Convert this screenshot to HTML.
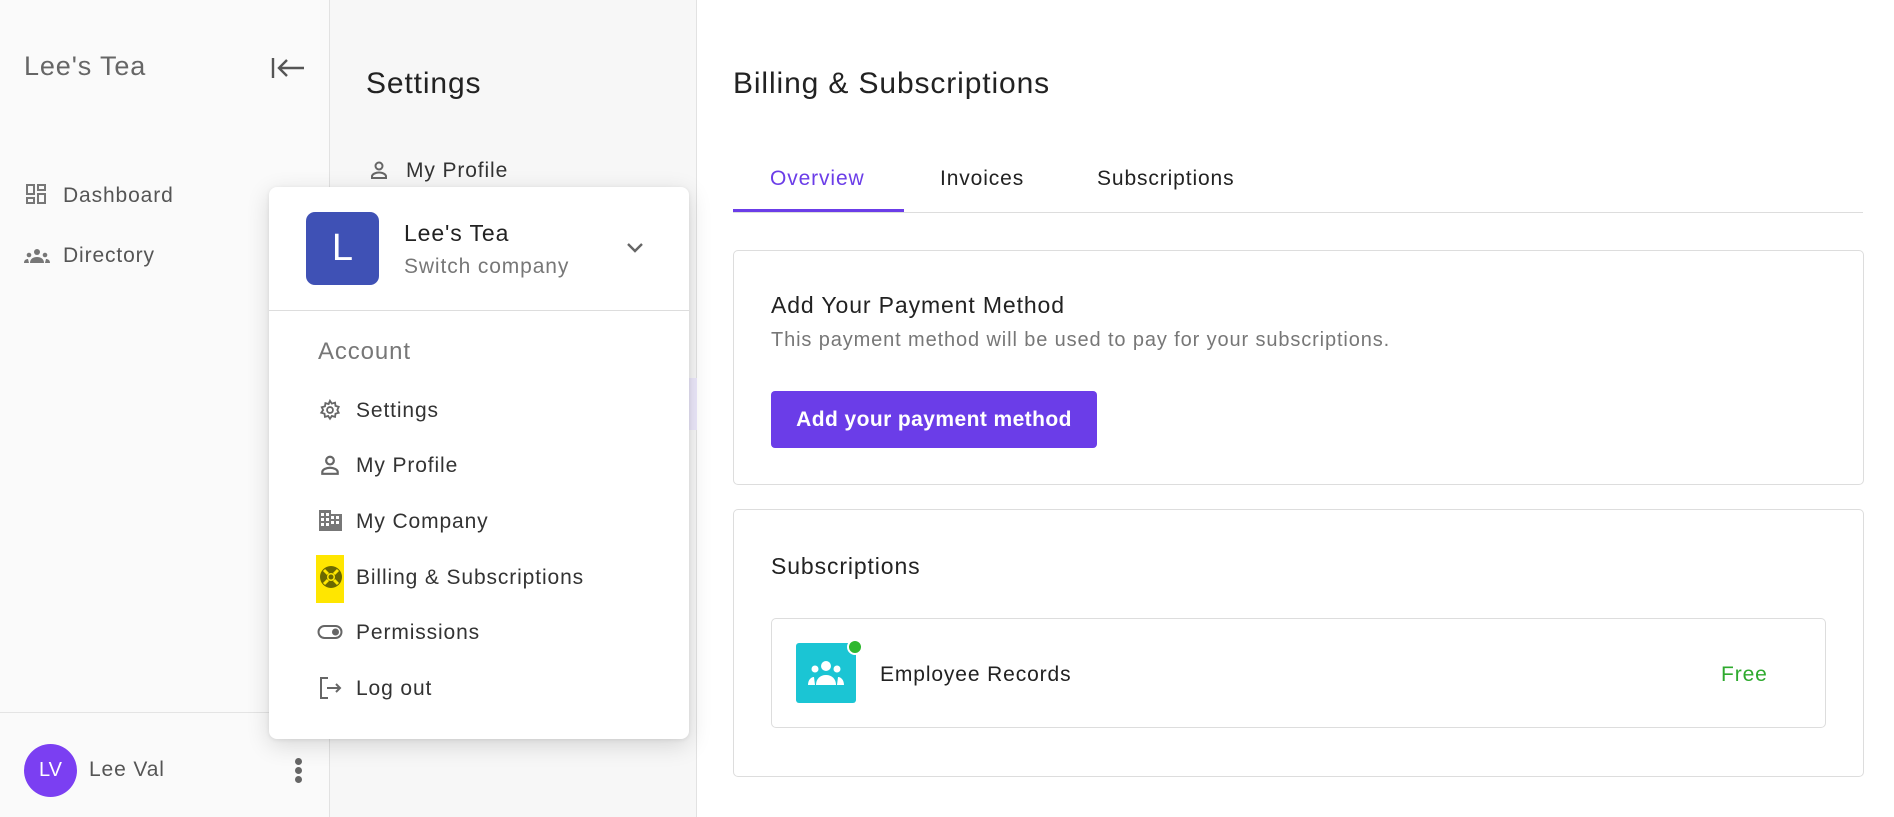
<!DOCTYPE html>
<html><head><meta charset="utf-8">
<style>
*{box-sizing:border-box;margin:0;padding:0}
body{width:1894px;height:817px;overflow:hidden;background:#fff;font-family:"Liberation Sans",sans-serif;position:relative;color:#222;letter-spacing:.055em}
.abs{position:absolute;white-space:nowrap}
#side{position:absolute;left:0;top:0;width:330px;height:817px;background:#fafafa;border-right:1px solid #e2e2e2}
#set{position:absolute;left:330px;top:0;width:367px;height:817px;background:#f7f7f7;border-right:1px solid #e2e2e2}
.t{line-height:1}
#pop{position:absolute;left:269px;top:187px;width:420px;height:552px;background:#fff;border-radius:8px;box-shadow:0 6px 24px rgba(0,0,0,.14),0 1px 4px rgba(0,0,0,.08)}
.item{position:absolute;left:87px;font-size:21px;color:#333;line-height:1}
.ic{position:absolute;left:-37px;top:-1px}
.card{position:absolute;border:1px solid #ddd;border-radius:5px;background:#fff}
</style></head><body>
<div id="side">
 <div class="abs t" style="left:24px;top:53px;font-size:27px;color:#666">Lee's Tea</div>
 <svg class="abs" style="left:270px;top:56px" width="36" height="24" viewBox="0 0 36 24"><path d="M3 2v20M34 12H9M17 4l-8 8 8 8" stroke="#555" stroke-width="2.4" fill="none"/></svg>
 <svg class="abs" style="left:26px;top:184px" width="20" height="20" viewBox="0 0 20 20" fill="none" stroke="#777" stroke-width="2"><rect x="1" y="1" width="7" height="9"/><rect x="12" y="1" width="7" height="5"/><rect x="1" y="14" width="7" height="5"/><rect x="12" y="10" width="7" height="9"/></svg>
 <div class="abs t" style="left:63px;top:185px;font-size:21px;color:#555">Dashboard</div>
 <svg class="abs" style="left:24px;top:248px" width="26" height="16" viewBox="0 0 26 16" fill="#777"><circle cx="13" cy="4" r="3"/><circle cx="5" cy="7" r="2.3"/><circle cx="21" cy="7" r="2.3"/><path d="M6 15c0-4 3-6 7-6s7 2 7 6z"/><path d="M0 15c0-3 2-4 4-4l1 4zM26 15c0-3-2-4-4-4l-1 4z"/></svg>
 <div class="abs t" style="left:63px;top:245px;font-size:21px;color:#555">Directory</div>
 <div class="abs" style="left:0;top:712px;width:330px;border-top:1px solid #e4e4e4"></div>
 <div class="abs" style="left:24px;top:744px;width:53px;height:53px;border-radius:50%;background:#7b3ff2;color:#fff;font-size:20px;text-align:center;line-height:53px;letter-spacing:0">LV</div>
 <div class="abs t" style="left:89px;top:759px;font-size:21px;color:#555">Lee Val</div>
 <div class="abs" style="left:295px;top:758px;width:7px;height:7px;border-radius:50%;background:#666;box-shadow:0 9px 0 #666,0 18px 0 #666"></div>
</div>
<div id="set">
 <div class="abs t" style="left:36px;top:69px;font-size:30px;color:#222">Settings</div>
 <svg class="abs" style="left:39px;top:160px" width="20" height="20" viewBox="0 0 20 20" fill="none" stroke="#666" stroke-width="2"><circle cx="10" cy="6" r="3.5"/><path d="M3 18v-1.5c0-2.5 4-4 7-4s7 1.5 7 4V18z"/></svg>
 <div class="abs t" style="left:76px;top:160px;font-size:21px;color:#333">My Profile</div>
 <div class="abs" style="left:359px;top:378px;width:8px;height:52px;background:#ece8fb"></div>
</div>
<div id="pop">
 <div class="abs" style="left:37px;top:25px;width:73px;height:73px;border-radius:9px;background:#3f51b5;color:#fff;font-size:38px;text-align:center;line-height:73px;letter-spacing:0">L</div>
 <div class="abs t" style="left:135px;top:35px;font-size:23px;color:#222">Lee's Tea</div>
 <div class="abs t" style="left:135px;top:69px;font-size:21px;color:#777">Switch company</div>
 <svg class="abs" style="left:357px;top:55px" width="18" height="12" viewBox="0 0 18 12"><path d="M2 2l7 7 7-7" stroke="#666" stroke-width="2.4" fill="none"/></svg>
 <div class="abs" style="left:0;top:123px;width:420px;border-top:1px solid #ddd"></div>
 <div class="abs t" style="left:49px;top:153px;font-size:24px;color:#777">Account</div>
 <div class="item" style="top:213px"><svg class="ic" width="22" height="22" viewBox="0 0 24 24" fill="none" stroke="#666" stroke-width="2"><circle cx="12" cy="12" r="3.2"/><path d="M12 2l2 3 3.5-1 .5 3.5 3.5 1-1.5 3.5 1.5 3-3.5 1-.5 3.5-3.5-1-2 3-2-3-3.5 1-.5-3.5-3.5-1L4.5 12 3 9l3.5-1L7 4.5l3.5 1z"/></svg>Settings</div>
 <div class="item" style="top:268px"><svg class="ic" width="22" height="22" viewBox="0 0 20 20" fill="none" stroke="#666" stroke-width="2"><circle cx="10" cy="6" r="3.5"/><path d="M3 18v-1.5c0-2.5 4-4 7-4s7 1.5 7 4V18z"/></svg>My Profile</div>
 <div class="item" style="top:324px"><svg class="ic" width="23" height="21" viewBox="0 0 23 21" fill="#777"><path d="M0 0h12v4h11v17H0zM2 3v3h3V3zm5 0v3h3V3zM2 8v3h3V8zm5 0v3h3V8zM2 13v3h3v-3zm5 0v3h3v-3zm5-7v3h3V6zm0 5v3h3v-3zm5-5v3h3V6zm0 5v3h3v-3z"/></svg>My Company</div>
 <div class="item" style="top:380px"><span class="abs" style="left:-40px;top:-12px;width:28px;height:48px;background:#ffe600"></span><svg class="ic" width="24" height="24" viewBox="0 0 24 24" style="top:-2px"><circle cx="12" cy="12" r="11" fill="#6b6800"/><circle cx="12" cy="12" r="4" fill="#ffe600"/><path d="M5 5l4 4M19 5l-4 4M5 19l4-4M19 19l-4-4" stroke="#ffe600" stroke-width="3"/><circle cx="12" cy="12" r="2.5" fill="#6b6800"/></svg>Billing &amp; Subscriptions</div>
 <div class="item" style="top:435px"><svg class="ic" width="26" height="16" viewBox="0 0 26 16" style="top:2px;left:-39px"><rect x="1.5" y="2" width="23" height="12" rx="6" fill="none" stroke="#666" stroke-width="2"/><circle cx="18.5" cy="8" r="3.5" fill="#666"/></svg>Permissions</div>
 <div class="item" style="top:491px"><svg class="ic" width="24" height="22" viewBox="0 0 24 22" fill="none" stroke="#666" stroke-width="2"><path d="M9 1H2v20h7M8 11h13M17 7l4 4-4 4"/></svg>Log out</div>
</div>
<div class="abs t" style="left:733px;top:69px;font-size:30px;color:#222">Billing &amp; Subscriptions</div>
<div class="abs t" style="left:770px;top:168px;font-size:21px;color:#6b3de8">Overview</div>
<div class="abs t" style="left:940px;top:168px;font-size:21px;color:#222">Invoices</div>
<div class="abs t" style="left:1097px;top:168px;font-size:21px;color:#222">Subscriptions</div>
<div class="abs" style="left:733px;top:212px;width:1130px;border-top:1px solid #ddd"></div>
<div class="abs" style="left:733px;top:209px;width:171px;height:3px;background:#6b3de8"></div>
<div class="card" style="left:733px;top:250px;width:1131px;height:235px">
 <div class="abs t" style="left:37px;top:43px;font-size:23px;color:#222">Add Your Payment Method</div>
 <div class="abs t" style="left:37px;top:79px;font-size:20px;color:#777">This payment method will be used to pay for your subscriptions.</div>
 <div class="abs" style="left:37px;top:140px;width:326px;height:57px;background:#6b3de8;border-radius:4px;color:#fff;font-size:21px;font-weight:bold;text-align:center;line-height:57px;letter-spacing:.02em">Add your payment method</div>
</div>
<div class="card" style="left:733px;top:509px;width:1131px;height:268px">
 <div class="abs t" style="left:37px;top:45px;font-size:23px;color:#222">Subscriptions</div>
 <div class="card" style="left:37px;top:108px;width:1055px;height:110px">
  <div class="abs" style="left:24px;top:24px;width:60px;height:60px;background:#1bc5d4;border-radius:3px"></div>
  <svg class="abs" style="left:36px;top:40px" width="36" height="28" viewBox="0 0 36 28" fill="#fff"><circle cx="18" cy="7" r="5"/><circle cx="7" cy="10" r="3.5"/><circle cx="29" cy="10" r="3.5"/><path d="M8 26c0-6 4-10 10-10s10 4 10 10z"/><path d="M0 26c0-5 3-8 6-8l1 8zM36 26c0-5-3-8-6-8l-1 8z"/></svg>
  <div class="abs" style="left:75px;top:20px;width:16px;height:16px;border-radius:50%;background:#2eb82e;border:2px solid #fff"></div>
  <div class="abs t" style="left:108px;top:45px;font-size:21px;color:#222">Employee Records</div>
  <div class="abs t" style="left:949px;top:45px;font-size:21px;color:#2eaa2e">Free</div>
 </div>
</div>
</body></html>
